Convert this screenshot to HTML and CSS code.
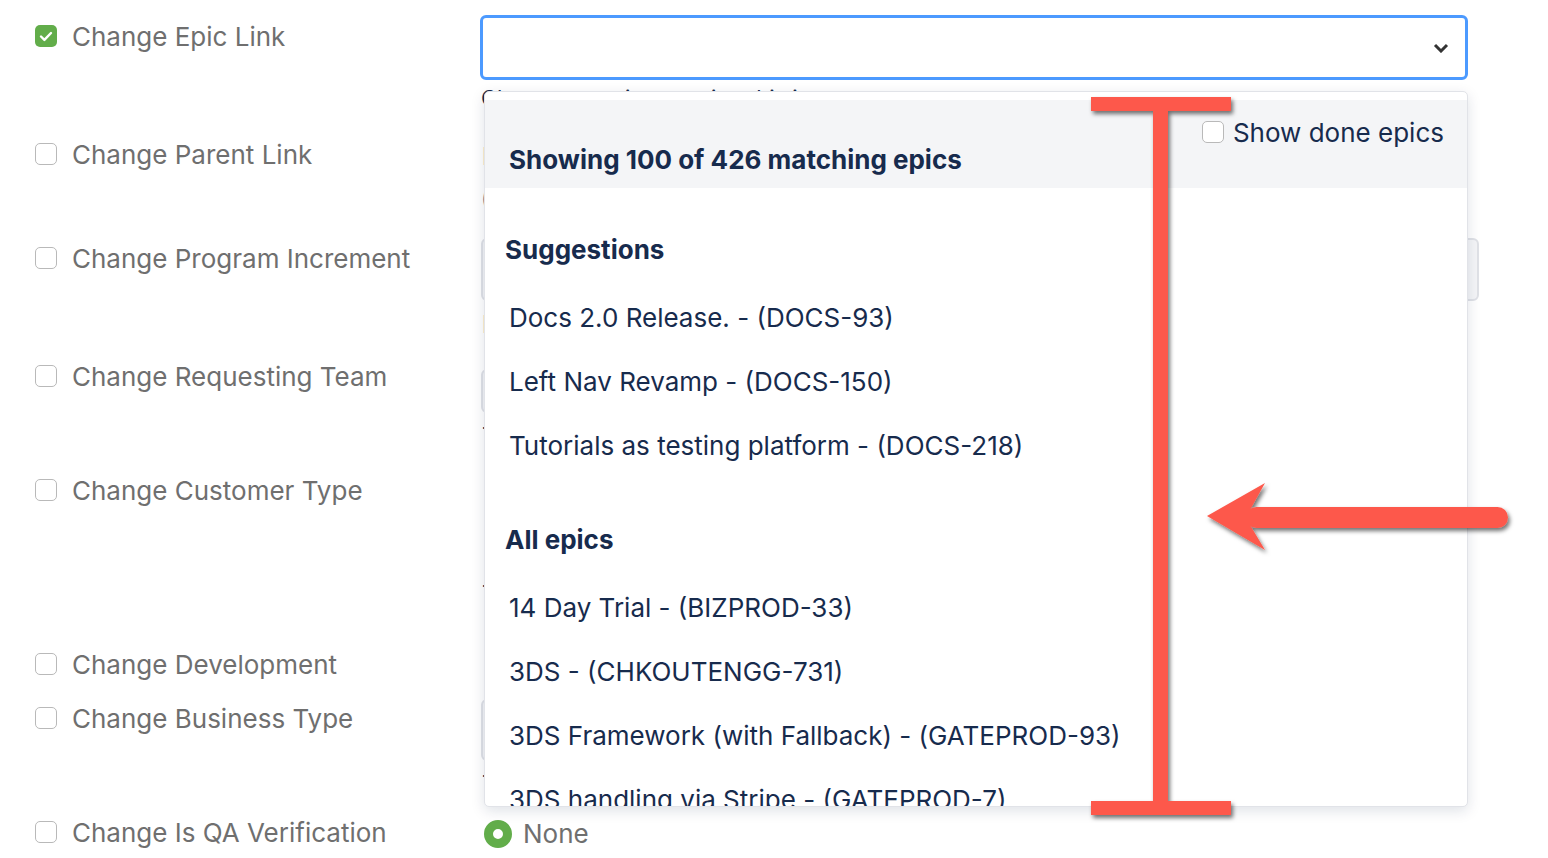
FILE: index.html
```html
<!DOCTYPE html>
<html lang="en">
<head>
  <meta charset="UTF-8">
  <title>Bulk change – Epic Link</title>
  <link rel="stylesheet" href="styles.css">
</head>
<body>
<div class="page">

  <div class="form">
    <div class="row">
      <label class="opt"><span class="cb checked"><svg viewBox="0 0 22 22" width="22" height="22"><path d="M6 11.5l3.4 3.4L16 8" fill="none" stroke="#fff" stroke-width="2.4" stroke-linecap="round" stroke-linejoin="round"/></svg></span>Change Epic Link</label>
      <div class="field">
        <div class="select">
          <svg class="chevron" viewBox="0 0 16 10" width="16" height="10"><path d="M2 2l6 6 6-6" fill="none" stroke="#333" stroke-width="3"/></svg>
        </div>
        <p class="help">Choose an epic to assign this issue to.</p>
      </div>
    </div>

    <div class="row row-s">
      <label class="opt"><span class="cb"></span>Change Parent Link</label>
      <div class="field">
        <p class="value">Issue has no parent</p>
        <p class="help grey">(Only issues of a higher level can be chosen)</p>
      </div>
    </div>

    <div class="row">
      <label class="opt"><span class="cb"></span>Change Program Increment</label>
      <div class="field">
        <div class="input wide"></div>
        <p class="value">Increment for this work</p>
      </div>
    </div>

    <div class="row row-m">
      <label class="opt"><span class="cb"></span>Change Requesting Team</label>
      <div class="field">
        <div class="input short"></div>
        <p class="value">Team that requested the work</p>
      </div>
    </div>

    <div class="row row-l">
      <label class="opt"><span class="cb"></span>Change Customer Type</label>
      <div class="field">
        <p class="value low">Type of customer</p>
      </div>
    </div>

    <div class="row row-xs">
      <label class="opt"><span class="cb"></span>Change Development</label>
      <div class="field"></div>
    </div>

    <div class="row row-m">
      <label class="opt"><span class="cb"></span>Change Business Type</label>
      <div class="field">
        <div class="input tall"></div>
        <p class="value">Type of business</p>
      </div>
    </div>

    <div class="row row-xs">
      <label class="opt"><span class="cb"></span>Change Is QA Verification</label>
      <div class="field">
        <label class="radio"><span class="dot"></span>None</label>
      </div>
    </div>
  </div>

  <div class="menu">
    <div class="menu-head">
      <span class="menu-title">Showing 100 of 426 matching epics</span>
      <label class="done"><span class="cb"></span>Show done epics</label>
    </div>
    <div class="group">
      <h3>Suggestions</h3>
      <div class="item">Docs 2.0 Release. - (DOCS-93)</div>
      <div class="item">Left Nav Revamp - (DOCS-150)</div>
      <div class="item">Tutorials as testing platform - (DOCS-218)</div>
    </div>
    <div class="group">
      <h3>All epics</h3>
      <div class="item">14 Day Trial - (BIZPROD-33)</div>
      <div class="item">3DS - (CHKOUTENGG-731)</div>
      <div class="item">3DS Framework (with Fallback) - (GATEPROD-93)</div>
      <div class="item">3DS handling via Stripe - (GATEPROD-7)</div>
    </div>
  </div>

  <svg class="marks" width="1548" height="858" viewBox="0 0 1548 858">
    <defs>
      <filter id="shade" x="-20%" y="-20%" width="140%" height="140%">
        <feDropShadow dx="2" dy="3" stdDeviation="2" flood-color="#000" flood-opacity="0.55"/>
      </filter>
    </defs>
    <g fill="#fd594b" filter="url(#shade)">
      <rect x="1153" y="104" width="15" height="704"/>
      <rect x="1091" y="97" width="140" height="14"/>
      <rect x="1091" y="801" width="140" height="14"/>
      <rect x="1246" y="507" width="262" height="21" rx="10.5"/>
      <path d="M1207 516 L1265 483 L1250 510 L1250 525 L1265 550 Z"/>
    </g>
  </svg>

</div>
</body>
</html>
```

FILE: styles.css
```css
body {
  margin: 0;
  font-family: Inter, "Noto Sans", sans-serif;
  background: #fff;
}

.page {
  position: relative;
  width: 1548px;
  height: 858px;
  overflow: hidden;
}

.form {
  padding: 15px 0 0 35px;
}

.row {
  display: grid;
  grid-template-columns: 445px 988px;
  height: 118px;
}

.row-s { height: 104px; }
.row-m { height: 114px; }
.row-l { height: 174px; }
.row-xs { height: 54px; }

.opt {
  display: flex;
  align-items: center;
  gap: 15px;
  height: 32px;
  margin-top: 5px;
  font-size: 26px;
  color: #6f6f6f;
  white-space: nowrap;
}

.cb {
  display: inline-block;
  box-sizing: border-box;
  width: 22px;
  height: 22px;
  border: 1.5px solid #b9b9b9;
  border-radius: 5px;
  background: #fff;
  flex: none;
}

.cb.checked {
  border: none;
  background: #62ad4a;
}

.cb svg {
  display: block;
}

.field {
  min-width: 0;
}

.select {
  position: relative;
  box-sizing: border-box;
  height: 65px;
  border: 3px solid #4c9aff;
  border-radius: 6px;
  background: #fff;
}

.chevron {
  position: absolute;
  right: 16px;
  top: 25px;
}

.help {
  margin: 4px 0 0 1px;
  font-size: 22px;
  line-height: 28px;
  color: #172b4d;
}

.help.grey {
  margin-top: 14px;
  color: #6b778c;
}

.value {
  margin: 10px 0 0 2px;
  font-size: 24px;
  line-height: 28px;
  color: #172b4d;
}

.value.low {
  margin-top: 112px;
}

.input {
  box-sizing: border-box;
  border: 2px solid #dfe1e6;
  border-radius: 6px;
  background: #f4f5f7;
  margin-left: 1px;
}

.input.wide {
  width: 998px;
  height: 63px;
  margin-top: 1px;
}

.input.short {
  height: 44px;
  margin-top: 14px;
}

.input.tall {
  height: 62px;
  margin-top: 2px;
}

.radio {
  display: flex;
  align-items: center;
  gap: 11px;
  margin: 7px 0 0 4px;
  font-size: 26px;
  color: #6f6f6f;
}

.dot {
  box-sizing: border-box;
  width: 28px;
  height: 28px;
  border-radius: 50%;
  border: 9.5px solid #62ad4a;
  background: #fff;
}

/* epic picker dropdown */
.menu {
  position: absolute;
  left: 484px;
  top: 91px;
  width: 984px;
  height: 716px;
  box-sizing: border-box;
  padding-top: 8px;
  border: 1px solid #e1e3e8;
  border-radius: 5px;
  background: #fff;
  box-shadow: 0 4px 14px rgba(9, 30, 66, 0.13);
  overflow: hidden;
  color: #172b4d;
}

.menu-head {
  display: flex;
  justify-content: space-between;
  height: 88px;
  box-sizing: border-box;
  padding: 0 23px 0 24px;
  background: #f4f5f7;
}

.menu-title {
  align-self: flex-end;
  margin-bottom: 12px;
  font-size: 26px;
  line-height: 32px;
  font-weight: 700;
}

.done {
  display: flex;
  align-items: center;
  gap: 9px;
  height: 32px;
  margin-top: 16px;
  font-size: 26px;
}

.group {
  padding-top: 46px;
}

.group h3 {
  margin: 0 0 20px 20px;
  font-size: 26px;
  line-height: 32px;
  font-weight: 700;
}

.item {
  padding: 16px 24px;
  font-size: 26px;
  line-height: 32px;
  white-space: nowrap;
}

.marks {
  position: absolute;
  left: 0;
  top: 0;
  pointer-events: none;
}
```
